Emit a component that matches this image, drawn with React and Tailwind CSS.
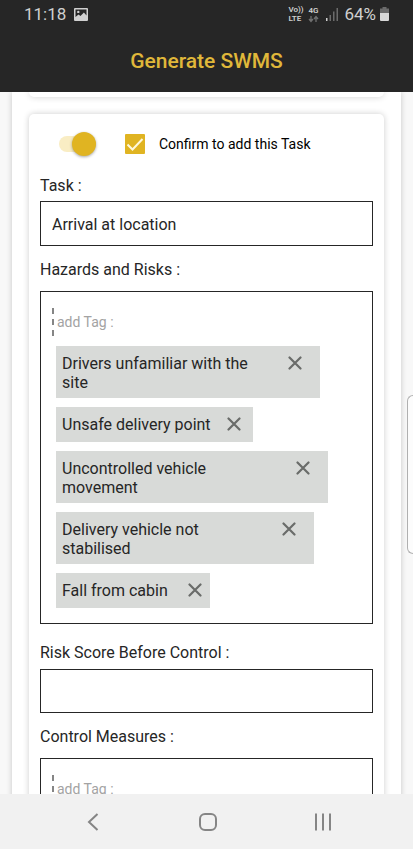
import React from "react";

const hazards = [
  { text: "Drivers unfamiliar with the site", box: "w-[264px] pr-[18px]" },
  { text: "Unsafe delivery point", box: "w-[197px] pr-3" },
  { text: "Uncontrolled vehicle movement", box: "w-[272px] pr-[18px]" },
  { text: "Delivery vehicle not stabilised", box: "w-[258px] pr-[18px]" },
  { text: "Fall from cabin", box: "w-[154px] pr-2" },
];

function StatusBar() {
  return (
    <div className="flex h-7 items-center justify-between pl-6 pr-6 text-[#d0d0d0]">
      <div className="flex items-center gap-2">
        <span className="text-[17px] leading-5">11:18</span>
        <svg width="14" height="13" viewBox="0 0 14 13" aria-hidden="true">
          <path
            fillRule="evenodd"
            fill="currentColor"
            d="M1 0h12a1 1 0 0 1 1 1v11a1 1 0 0 1-1 1H1a1 1 0 0 1-1-1V1a1 1 0 0 1 1-1zM1.5 1.5v7.500l3-2.500 2 1.600 3.400-3.600 2.600 3V1.500zM4.300 2.700a1.200 1.200 0 1 1 0 2.400 1.200 1.200 0 0 1 0-2.400z"
          />
        </svg>
      </div>
      <div className="flex items-center">
        <div className="flex w-5 flex-col text-[8px] font-semibold leading-[9px]">
          <span>Vo))</span>
          <span>LTE</span>
        </div>
        <div className="flex w-[18px] flex-col text-[8px] font-semibold leading-[9px]">
          <span>4G</span>
          <svg width="11" height="8" viewBox="0 0 11 8" className="text-[#707070]" aria-hidden="true">
            <path d="M3 1v5M1 4l2 2.500L5 4M8 7V2M6 4l2-2.500L10 4" stroke="currentColor" strokeWidth="1.300" fill="none" />
          </svg>
        </div>
        <svg width="12" height="14" viewBox="0 0 12 14" aria-hidden="true">
          <rect x="0" y="11" width="1.500" height="3" fill="#d0d0d0" />
          <rect x="3.500" y="8" width="1.500" height="6" fill="#6b6b6b" />
          <rect x="7" y="4.500" width="1.500" height="9.500" fill="#6b6b6b" />
          <rect x="10.500" y="1" width="1.500" height="13" fill="#6b6b6b" />
        </svg>
        <span className="ml-1.5 text-[17px] leading-5">64%</span>
        <svg width="9" height="14" viewBox="0 0 9 14" className="ml-1" aria-hidden="true">
          <rect x="2.500" y="0" width="4" height="2" fill="#6b6b6b" />
          <rect x="0" y="1.500" width="9" height="4.500" fill="#6b6b6b" />
          <path d="M0 6h9v7a1 1 0 0 1-1 1H1a1 1 0 0 1-1-1z" fill="#d8d8d8" />
        </svg>
      </div>
    </div>
  );
}

function TagInput({ id }) {
  return (
    <input
      id={id}
      type="text"
      placeholder="add Tag :"
      className="block h-7 w-full border-l-2 border-dashed border-[#858585] pb-px pl-[3px] text-[14px] text-[#262626] outline-none placeholder:text-[#a3a3a3]"
    />
  );
}

function Tag({ text, box }) {
  return (
    <li className={`flex min-h-[35px] items-start justify-between bg-[#d8dad8] pb-1.5 pl-1.5 pt-2 ${box}`}>
      <span className="max-w-[190px] leading-[19px]">{text}</span>
      <button type="button" aria-label={`Remove ${text}`} className="mt-0.5 shrink-0">
        <svg width="14" height="14" viewBox="0 0 14 14" aria-hidden="true">
          <path d="M1.500 1.500l11 11M12.500 1.500l-11 11" stroke="#6a6c6a" strokeWidth="2.200" strokeLinecap="round" />
        </svg>
      </button>
    </li>
  );
}

export default function App() {
  return (
    <div className="relative flex h-screen flex-col overflow-hidden bg-[#f8f8f8] font-[Roboto,sans-serif] text-[16px] text-[#262626]">
      <header className="h-[92px] shrink-0 bg-[#262626]">
        <StatusBar />
        <h1 className="pt-[21px] text-center text-[21px] font-medium leading-6 text-[#e0b83a]">Generate SWMS</h1>
      </header>

      <main className="min-h-0 flex-1 overflow-y-auto px-3 [scrollbar-width:none]">
        <div className="bg-white px-[17px] shadow-[0_0_6px_rgba(0,0,0,0.2)]">
          <div className="h-[5px] rounded-b-[5px] bg-white shadow-[0_0_6px_rgba(0,0,0,0.2)]" />

          <section className="mt-[17px] rounded-[5px] bg-white px-[11px] pb-4 shadow-[0_0_6px_rgba(0,0,0,0.2)]">
            <div className="flex h-[59px] items-center pl-[19px]">
              <input
                type="checkbox"
                role="switch"
                aria-label="Enable task"
                defaultChecked
                className="flex h-4 w-[37px] appearance-none items-center justify-end rounded-full bg-[#f9edc4] before:block before:size-6 before:shrink-0 before:rounded-full before:bg-[#e0b422] before:shadow-[0_1px_3px_rgba(0,0,0,0.35)]"
              />
              <label className="ml-[29px] flex items-center text-[14px] leading-5 text-black">
                <span className="grid size-5 [&>*]:col-start-1 [&>*]:row-start-1">
                  <input type="checkbox" defaultChecked className="size-5 appearance-none rounded-[1px] bg-[#e0b422]" />
                  <svg width="20" height="20" viewBox="0 0 20 20" fill="none" className="pointer-events-none" aria-hidden="true">
                    <path d="M2.500 10.500l5 5L17.500 5" stroke="#fff8dc" strokeWidth="2" />
                  </svg>
                </span>
                <span className="ml-3.5">Confirm to add this Task</span>
              </label>
            </div>

            <label htmlFor="task" className="mt-[3px] block leading-5">Task :</label>
            <input
              id="task"
              type="text"
              defaultValue="Arrival at location"
              className="mt-[5px] block h-[45px] w-full border border-[#262626] px-[11px] pt-0.5 outline-none"
            />

            <label htmlFor="hazards" className="mt-3.5 block leading-5">Hazards and Risks :</label>
            <div className="mt-[11px] border border-[#262626] px-[11px] pb-[15px] pt-4">
              <TagInput id="hazards" />
              <ul className="mt-[10px] flex flex-col gap-[9px] pl-1">
                {hazards.map((h) => (
                  <Tag key={h.text} text={h.text} box={h.box} />
                ))}
              </ul>
            </div>

            <label htmlFor="score" className="mt-[19px] block leading-5">Risk Score Before Control :</label>
            <input id="score" type="text" className="mt-1.5 block h-11 w-full border border-[#262626] px-[11px] outline-none" />

            <label htmlFor="controls" className="mt-3.5 block leading-5">Control Measures :</label>
            <div className="mt-[11px] border border-[#262626] px-[11px] pb-[15px] pt-4">
              <TagInput id="controls" />
            </div>
          </section>
        </div>
      </main>

      <div className="absolute right-0 top-[395px] h-[159px] w-1.5 rounded-l-lg border border-r-0 border-[#b0b0b0] bg-[#fcfcfc]" />

      <nav className="grid h-[55px] shrink-0 grid-cols-3 place-items-center bg-[#f1f1f1] pl-[35px] pr-8 text-[#858585]">
        <button type="button" aria-label="Back">
          <svg width="12" height="18" viewBox="0 0 12 18" fill="none" aria-hidden="true">
            <path d="M10.500 1L2 9l8.500 8" stroke="currentColor" strokeWidth="2" />
          </svg>
        </button>
        <button type="button" aria-label="Home">
          <svg width="20" height="20" viewBox="0 0 20 20" fill="none" aria-hidden="true">
            <rect x="2" y="2" width="16" height="16" rx="5" stroke="currentColor" strokeWidth="2" />
          </svg>
        </button>
        <button type="button" aria-label="Recent apps">
          <svg width="18" height="18" viewBox="0 0 18 18" aria-hidden="true">
            <path d="M2 0.500v17M9 0.500v17M16 0.500v17" stroke="currentColor" strokeWidth="2" />
          </svg>
        </button>
      </nav>
    </div>
  );
}
